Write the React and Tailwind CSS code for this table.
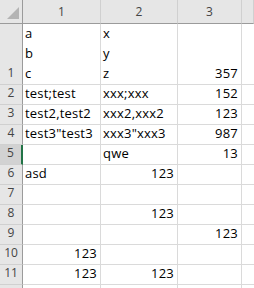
const rows = [
  { n: 1, tall: true, cells: ['a\nb\nc', 'x\ny\nz', 357] },
  { n: 2, cells: ['test;test', 'xxx;xxx', 152] },
  { n: 3, cells: ['test2,test2', 'xxx2,xxx2', 123] },
  { n: 4, cells: ['test3"test3', 'xxx3"xxx3', 987] },
  { n: 5, selected: true, cells: ['', 'qwe', 13] },
  { n: 6, cells: ['asd', 123, ''] },
  { n: 7, cells: ['', '', ''] },
  { n: 8, cells: ['', 123, ''] },
  { n: 9, cells: ['', '', 123] },
  { n: 10, cells: [123, '', ''] },
  { n: 11, cells: [123, 123, ''] },
  // row 12 is only a sliver at the bottom edge, its label falls outside
  { n: '', cells: ['', '', ''] },
];

function Cell({ value }) {
  const isNumber = typeof value === 'number';
  return (
    <div
      className={`flex items-end overflow-visible whitespace-pre-line bg-white border-r border-b border-[#dadada] pb-[1px] leading-[20px] text-[13px] tracking-[0.2px] text-black ${
        isNumber ? 'justify-end pr-[3px]' : 'justify-start pl-[2px]'
      }`}
    >
      {value}
    </div>
  );
}

export default function App() {
  return (
    <div
      className="h-screen overflow-hidden bg-white"
      style={{ fontFamily: '"Open Sans", Lato, sans-serif' }}
    >
      <div className="grid grid-cols-[23px_78px_77px_64px_1fr] grid-rows-[24px_61px_repeat(11,20px)]">
        {/* corner */}
        <div className="relative bg-[#e6e6e6] border-r border-b border-[#9b9b9b]">
          <svg
            className="absolute left-[7px] top-[7px]"
            width="12"
            height="12"
            viewBox="0 0 12 12"
          >
            <polygon points="12,0 12,12 0,12" fill="#b4b4b4" />
          </svg>
        </div>
        {['1', '2', '3', ''].map((label, i) => (
          <div
            key={i}
            className="flex items-center justify-center bg-[#e6e6e6] border-r border-r-[#d0d0d0] border-b border-b-[#9b9b9b] text-[12px] text-[#444]"
          >
            {label}
          </div>
        ))}

        {rows.map((row, r) => (
          <div key={r} className="contents">
            <div
              className={`flex items-end justify-center pb-[2px] border-b border-b-[#d0d0d0] text-[12px] text-[#444] ${
                row.selected
                  ? 'bg-[#d2d2d2] border-r-2 border-r-[#217346]'
                  : 'bg-[#e6e6e6] border-r border-r-[#9b9b9b]'
              }`}
            >
              {row.n}
            </div>
            {row.cells.map((value, i) => (
              <Cell key={i} value={value} />
            ))}
            <div className="bg-white border-b border-[#dadada]" />
          </div>
        ))}
      </div>
    </div>
  );
}
